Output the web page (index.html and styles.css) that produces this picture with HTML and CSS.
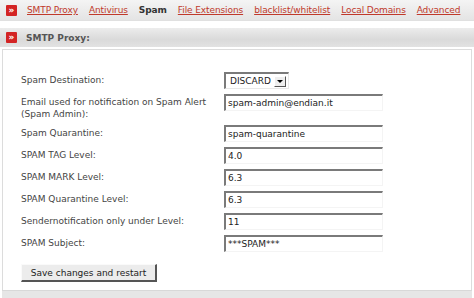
FILE: index.html
```html
<!DOCTYPE html>
<html lang="en">
<head>
    <meta charset="UTF-8">
    <title>Spam</title>
    <link rel="stylesheet" href="styles.css">
</head>
<body>
    <div class="tabs">
        <span class="icon">&raquo;</span>
        <a href="#" class="tab">SMTP Proxy</a>
        <a href="#" class="tab">Antivirus</a>
        <span class="tab current">Spam</span>
        <a href="#" class="tab">File Extensions</a>
        <a href="#" class="tab">blacklist/whitelist</a>
        <a href="#" class="tab">Local Domains</a>
        <a href="#" class="tab">Advanced</a>
    </div>
    <div class="section-head">
        <span class="icon">&raquo;</span>
        <span class="section-title">SMTP Proxy:</span>
    </div>
    <div class="box">
        <form class="form">
            <div class="row">
                <label>Spam Destination:</label>
                <div class="select">
                    <span>DISCARD</span>
                    <span class="arrow"></span>
                </div>
            </div>
            <div class="row">
                <label>Email used for notification on Spam Alert<br>(Spam Admin):</label>
                <input type="text" value="spam-admin@endian.it">
            </div>
            <div class="row">
                <label>Spam Quarantine:</label>
                <input type="text" value="spam-quarantine">
            </div>
            <div class="row">
                <label>SPAM TAG Level:</label>
                <input type="text" value="4.0">
            </div>
            <div class="row">
                <label>SPAM MARK Level:</label>
                <input type="text" value="6.3">
            </div>
            <div class="row">
                <label>SPAM Quarantine Level:</label>
                <input type="text" value="6.3">
            </div>
            <div class="row">
                <label>Sendernotification only under Level:</label>
                <input type="text" value="11">
            </div>
            <div class="row">
                <label>SPAM Subject:</label>
                <input type="text" value="***SPAM***">
            </div>
            <div class="actions">
                <button type="button" class="btn">Save changes and restart</button>
            </div>
        </form>
    </div>
    <div class="foot"></div>
</body>
</html>
```

FILE: styles.css
```css
body {
    margin: 0;
    padding: 0;
    font-family: "DejaVu Sans", Verdana, sans-serif;
    font-size: 9px;
    color: #444;
    background: #fff;
}
.icon {
    display: inline-flex;
    flex: none;
    align-items: center;
    justify-content: center;
    width: 11px;
    height: 11px;
    background: #d32424;
    color: #fff;
    font-size: 9px;
    font-weight: bold;
    line-height: 1;
    border-radius: 1px;
}
.tabs {
    display: flex;
    align-items: center;
    height: 20px;
    padding-left: 6px;
    white-space: nowrap;
    background: linear-gradient(#f4f4f4, #e4e4e4);
    border-bottom: 1px solid #e0e0e0;
}
.tabs .icon {
    margin-right: 10px;
}
.tab {
    margin-right: 11px;
    color: #c0392b;
    font-size: 9px;
    letter-spacing: -0.1px;
}
.tab.current {
    color: #333;
    font-weight: bold;
}
.section-head {
    display: flex;
    align-items: center;
    height: 19px;
    margin-top: 7px;
    padding-left: 6px;
    background: linear-gradient(#ececec, #dadada 60%, #e2e2e2);
}
.section-title {
    margin-left: 9px;
    font-weight: bold;
    color: #555;
    font-size: 9px;
}
.box {
    margin: 2px 2px 0;
    border: 1px solid #dcdcdc;
    border-bottom: none;
    height: 240px;
}
.form {
    padding: 22px 0 0 18px;
}
.row {
    display: flex;
    align-items: flex-start;
    margin-bottom: 5px;
}
.row label {
    width: 203px;
    line-height: 12px;
    padding-top: 2px;
}
input {
    width: 152px;
    height: 12px;
    margin: 0;
    padding: 1px 2px;
    font-family: "DejaVu Sans", sans-serif;
    font-size: 9px;
    color: #222;
    border: 2px solid;
    border-color: #7a7a7a #f4f4f4 #f4f4f4 #7a7a7a;
    border-width: 2px 1px 1px 2px;
}
.select {
    display: flex;
    align-items: center;
    justify-content: space-between;
    width: 56px;
    height: 12px;
    padding: 1px 2px 1px 4px;
    border: 1px solid;
    border-color: #7a7a7a #e8e8e8 #e8e8e8 #7a7a7a;
    border-width: 2px 1px 1px 2px;
    color: #222;
}
.arrow {
    position: relative;
    width: 10px;
    height: 9px;
    background: #eee;
    border: 1px solid;
    border-color: #fff #555 #555 #fff;
}
.arrow::after {
    content: "";
    position: absolute;
    left: 2px;
    top: 3px;
    border-left: 3px solid transparent;
    border-right: 3px solid transparent;
    border-top: 3px solid #000;
}
.actions {
    padding-top: 7px;
}
.btn {
    font-family: "DejaVu Sans", sans-serif;
    font-size: 9px;
    color: #222;
    width: 136px;
    height: 18px;
    padding: 0;
    background: #ececec;
    border: 1px solid;
    border-color: #fafafa #555 #555 #fafafa;
    border-width: 1px 2px 2px 1px;
}
.foot {
    height: 8px;
    margin: 0 2px;
    background: #e6e6e6;
    border-top: 1px solid #d8d8d8;
}
```
